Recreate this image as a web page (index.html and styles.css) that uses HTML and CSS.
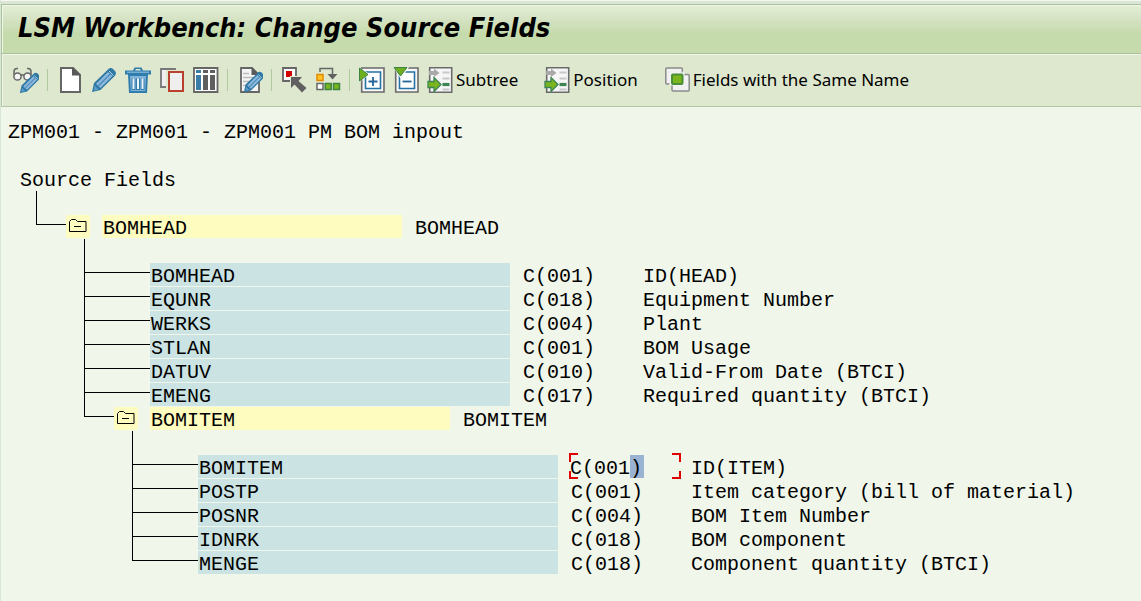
FILE: index.html
```
<!DOCTYPE html>
<html lang="en">

<head>
    <meta charset="UTF-8">
    <title>LSM Workbench: Change Source Fields</title>
    <link rel="stylesheet" href="styles.css">
</head>

<body>
    <!-- shared symbols -->
    <svg class="symbols" width="0" height="0" aria-hidden="true">
        <symbol id="pencil" viewBox="0 0 26 26">
            <path d="M1 25l2-9L17 2.500c1.500-1.800 3.500-2 5-.6l2 2c1.500 1.500 1.200 3.400-.3 5L9.500 23z" fill="#2f78a5" />
            <path d="M5 17L17 5l4.500 4L9.500 21z" fill="#8db9dc" />
            <path d="M7.200 19L19.300 7" stroke="#4b8ab8" stroke-width="1.300" />
            <path d="M18 4l4.500 4.500" stroke="#b7d3e6" stroke-width="1" />
            <path d="M3.500 18.500l4 4-4.500 1.200z" fill="#5b9bc5" />
        </symbol>
        <symbol id="folder" viewBox="0 0 24 23">
            <path d="M3.500 16.500v-10l2-2h4l2 2h8.500v10z" fill="none" stroke="#000" stroke-width="1" />
            <path d="M8 11.500h7" stroke="#000" />
        </symbol>
        <symbol id="goto" viewBox="0 0 26 26">
            <path d="M2.700.8h22v24.400h-22z" fill="#f6f6f6" stroke="#6a6a6a" stroke-width="1.600" />
            <path d="M2 4h5V1.500L12.500 6 7 10V8H2z" fill="#a9a9a9" />
            <path d="M15.500 5.500h7M15.500 11.500h7M15.500 22.500h7" stroke="#c8c8c8" stroke-width="2" />
            <path d="M15.500 17.500h7" stroke="#3c8455" stroke-width="3.200" />
            <path d="M1 14.500h6v-4l7 7-7 7v-4H1z" fill="#7ab51d" stroke="#3c8455" stroke-width="1.300" />
        </symbol>
    </svg>

    <header class="title-bar">
        <h1>LSM Workbench: Change Source Fields</h1>
    </header>

    <div class="toolbar" role="toolbar">
        <button type="button" aria-label="Display/Change">
            <svg class="icon" viewBox="0 0 26 26">
                <g fill="none" stroke="#666" stroke-width="1.500">
                    <circle cx="4.500" cy="9.500" r="3.600" fill="#f5f5f5" />
                    <circle cx="14.500" cy="9.500" r="3.600" fill="#f5f5f5" />
                    <path d="M8 8.500q1.500-1.500 3 0M1 8V4q.5-3 4-2.500M18 8V4q-.5-3-4-2.500" />
                </g>
                <svg x="6" y="5" width="22" height="22"><use href="#pencil" /></svg>
            </svg>
        </button>
        <span class="separator"></span>
        <button type="button" aria-label="Create">
            <svg class="icon" viewBox="0 0 26 26">
                <path d="M4 1h12l7 7v17H4z" fill="#fff" stroke="#666" stroke-width="2" />
                <path d="M15 0l9 8.500h-9z" fill="#5a5a5a" />
            </svg>
        </button>
        <button type="button" aria-label="Change">
            <svg class="icon"><use href="#pencil" /></svg>
        </button>
        <button type="button" aria-label="Delete">
            <svg class="icon" viewBox="0 0 26 26">
                <path d="M0 3.500h8L9.500.5h7L18 3.500h8v4h-3L22 26H4L3 7.500H0z" fill="#2f7dad" />
                <path d="M2 4.500h22v1.500H2z" fill="#79aed2" />
                <path d="M10 3.500l1-1.500h4l1 1.500z" fill="#dde8cd" />
                <path d="M5 9h16l-.8 15H5.800z" fill="#83b4da" />
                <path d="M8.500 11.500V23M13 11.500V23M17.500 11.500V23" stroke="#2f7dad" stroke-width="4" />
                <path d="M8.500 11.500V22M13 11.500V22M17.500 11.500V22" stroke="#eef4f8" stroke-width="2" />
            </svg>
        </button>
        <button type="button" aria-label="Copy">
            <svg class="icon" viewBox="0 0 26 26">
                <path d="M2 2h14v18H2z" fill="#eee" stroke="#777" stroke-width="1.800" />
                <path d="M7 3h19v23H7z" fill="#dde8cd" />
                <path d="M10 5h14v19H10z" fill="#eee" stroke="#b8402c" stroke-width="2" />
            </svg>
        </button>
        <button type="button" aria-label="Fields">
            <svg class="icon" viewBox="0 0 26 26">
                <path d="M1 1h23.500v24H1z" fill="#fff" stroke="#666" stroke-width="1.800" />
                <path d="M3 3h5v3H3zM3 8h5v15H3z" fill="#3a7ea8" />
                <path d="M10 3h5v3h-5zM10 8h5v15h-5zM17 3h5v3h-5zM17 8h5v15h-5z" fill="#5f5f5f" />
            </svg>
        </button>
        <span class="separator"></span>
        <button type="button" aria-label="Edit Long Text">
            <svg class="icon" viewBox="0 0 26 26">
                <path d="M4 1h11l7 7v17H4z" fill="#f5f5f5" stroke="#666" stroke-width="1.800" />
                <path d="M14.500 0l8.500 8h-8.500z" fill="#5a5a5a" />
                <path d="M6 6.500h6M6 10.500h10M6 14.500h9M6 18.500h7" stroke="#bbb" stroke-width="1.500" />
                <svg x="6" y="4" width="22" height="22"><use href="#pencil" /></svg>
            </svg>
        </button>
        <span class="separator"></span>
        <button type="button" aria-label="Select">
            <svg class="icon" viewBox="0 0 26 26">
                <path d="M2 1h13v13H2z" fill="#fff" stroke="#666" stroke-width="1.800" />
                <path d="M5 4h6v6H5z" fill="#d40000" />
                <path d="M9 9h14l-3.500 4.500L26 20.500 20.500 26l-7-6.500L9 23z" fill="#dde8cd" />
                <path d="M10 10h11l-3.500 4 8 7-4.500 4.500-7.500-8L10 21z" fill="#606060" />
            </svg>
        </button>
        <button type="button" aria-label="Reassign">
            <svg class="icon" viewBox="0 0 26 26">
                <path d="M5 5V1.500h12.500V8" fill="none" stroke="#666" stroke-width="1.500" />
                <path d="M12.500 7h10l-5 5.500z" fill="#606060" />
                <path d="M2 7.500h6v6H2z" fill="#ffc425" stroke="#e58a00" stroke-width="1.500" />
                <path d="M2 16.500h6v6H2z" fill="#fff" stroke="#666" stroke-width="1.500" />
                <path d="M10.200 16.500h6v6h-6zM18.500 16.500h6v6h-6z" fill="#7ab51d" stroke="#3c8440" stroke-width="1.500" />
            </svg>
        </button>
        <span class="separator"></span>
        <button type="button" aria-label="Expand">
            <svg class="icon" viewBox="0 0 26 26">
                <path d="M2.700 1h22.300v24H2.700z" fill="#f7f7f7" stroke="#6a6a6a" stroke-width="1.600" />
                <path d="M6.500 5h15v16.500h-15z" fill="#fff" stroke="#2772a5" stroke-width="1.600" />
                <path d="M9.500 14.500h9M14 10v9" stroke="#24659c" stroke-width="1.800" />
                <path d="M0 0l11 7.500L0 15z" fill="#f7f7f7" />
                <path d="M.5 1l8.500 6.500-8.500 6.500z" fill="#6fae20" stroke="#3c8440" />
            </svg>
        </button>
        <button type="button" aria-label="Collapse">
            <svg class="icon" viewBox="0 0 26 26">
                <path d="M2.700 1h22.300v24H2.700z" fill="#f7f7f7" stroke="#6a6a6a" stroke-width="1.600" />
                <path d="M6.500 5h15v16.500h-15z" fill="#fff" stroke="#2772a5" stroke-width="1.600" />
                <path d="M9.500 14.500h9" stroke="#24659c" stroke-width="1.800" />
                <path d="M0 0h16L8 12z" fill="#f7f7f7" />
                <path d="M1 .5h13L7.500 9z" fill="#6fae20" stroke="#3c8440" />
            </svg>
        </button>
        <button type="button" class="with-text">
            <svg class="icon"><use href="#goto" /></svg>
            Subtree
        </button>
        <button type="button" class="with-text">
            <svg class="icon"><use href="#goto" /></svg>
            Position
        </button>
        <button type="button" class="with-text">
            <svg class="icon" viewBox="0 0 26 26">
                <rect x="1.800" y="1" width="16.500" height="16" rx="1" fill="#f1f1f1" stroke="#8a8a8a" stroke-width="1.500" />
                <path d="M5.500 18.500h3M20 4.500v3" stroke="#dde8cf" stroke-width="3" />
                <rect x="8" y="7.500" width="17.200" height="16.500" rx="1" fill="#f1f1f1" stroke="#8a8a8a" stroke-width="1.500" />
                <path d="M5.500 5.500h15V18.500h-15z" fill="#f1f1f1" />
                <rect x="8" y="7.500" width="10.500" height="9.500" rx="1" fill="#7ab51d" stroke="#4a8f35" stroke-width="2" />
            </svg>
            Fields with the Same Name
        </button>
    </div>

    <main class="content">
        <p class="project">ZPM001 - ZPM001 - ZPM001 PM BOM inpout</p>

        <h2>Source Fields</h2>
        <ul class="tree root">
            <li class="trunk"></li>
            <li>
                <div class="row">
                    <span class="branch last"></span>
                    <button type="button" class="folder" aria-label="Collapse BOMHEAD"><svg><use href="#folder" /></svg></button>
                    <span class="structure">BOMHEAD</span>
                    <span>BOMHEAD</span>
                </div>
                <ul class="tree">
                    <li class="trunk"></li>
                    <li class="row"><span class="branch"></span><span class="field">BOMHEAD</span><span class="type">C(001)</span><span>ID(HEAD)</span></li>
                    <li class="row"><span class="branch"></span><span class="field">EQUNR</span><span class="type">C(018)</span><span>Equipment Number</span></li>
                    <li class="row"><span class="branch"></span><span class="field">WERKS</span><span class="type">C(004)</span><span>Plant</span></li>
                    <li class="row"><span class="branch"></span><span class="field">STLAN</span><span class="type">C(001)</span><span>BOM Usage</span></li>
                    <li class="row"><span class="branch"></span><span class="field">DATUV</span><span class="type">C(010)</span><span>Valid-From Date (BTCI)</span></li>
                    <li class="row"><span class="branch"></span><span class="field">EMENG</span><span class="type">C(017)</span><span>Required quantity (BTCI)</span></li>
                    <li>
                        <div class="row">
                            <span class="branch last"></span>
                            <button type="button" class="folder" aria-label="Collapse BOMITEM"><svg><use href="#folder" /></svg></button>
                            <span class="structure">BOMITEM</span>
                            <span>BOMITEM</span>
                        </div>
                        <ul class="tree">
                            <li class="trunk"></li>
                            <li class="row">
                                <span class="branch"></span><span class="field">BOMITEM</span>
                                <span class="type focused">C(001<mark>)</mark>
                                    <svg class="focus-frame" viewBox="0 0 112 26">
                                        <path d="M9 1H1v8M1 18v7h8M103 1h8v8M111 18v7h-8" fill="none" stroke="#e00000" stroke-width="2" />
                                    </svg>
                                </span>
                                <span>ID(ITEM)</span>
                            </li>
                            <li class="row"><span class="branch"></span><span class="field">POSTP</span><span class="type">C(001)</span><span>Item category (bill of material)</span></li>
                            <li class="row"><span class="branch"></span><span class="field">POSNR</span><span class="type">C(004)</span><span>BOM Item Number</span></li>
                            <li class="row"><span class="branch"></span><span class="field">IDNRK</span><span class="type">C(018)</span><span>BOM component</span></li>
                            <li class="row"><span class="branch last"></span><span class="field">MENGE</span><span class="type">C(018)</span><span>Component quantity (BTCI)</span></li>
                        </ul>
                    </li>
                </ul>
            </li>
        </ul>
    </main>
</body>

</html>
```

FILE: styles.css
```
* {
    box-sizing: border-box;
}

body {
    margin: 0;
    padding-top: 4px;
    min-height: 100vh;
    background: linear-gradient(#f4f8f0 1px, #dbe5d5 1px, #dbe5d5 4px, #f0f6ea 4px);
    border-left: 1px solid #d8e6d4;
    color: #000;
}

button {
    padding: 0;
    border: none;
    background: none;
    font: inherit;
    color: inherit;
    cursor: pointer;
}

.symbols {
    position: absolute;
}

/* Title */
.title-bar {
    height: 50px;
    padding-left: 16px;
    border: solid #abc09c;
    border-width: 1px 0 1px 1px;
    background: linear-gradient(#e3efd5, #d5e2c3 30%, #c5dbab 60%, #c5dbab);
    box-shadow: inset 1px 1px #f0f7e8;
}

h1 {
    margin: 0;
    font: italic bold 27px/46px "DejaVu Sans Condensed", "DejaVu Sans", sans-serif;
}

/* Toolbar */
.toolbar {
    display: flex;
    align-items: center;
    gap: 8px;
    height: 53px;
    padding-left: 11px;
    border: solid #b3c7a6;
    border-width: 0 0 1px 1px;
    background: #dde8cf;
    box-shadow: inset 1px 1px #f0f7e8;
    font: 17px/26px "Noto Sans", sans-serif;
}

.toolbar button {
    display: flex;
    align-items: center;
    gap: 3px;
    white-space: nowrap;
}

.toolbar .with-text {
    padding-right: 18px;
}

.icon {
    width: 26px;
    height: 26px;
    flex: none;
}

.separator {
    width: 1px;
    height: 22px;
    margin-right: 1px;
    background: #aecb9b;
}

/* Tree */
.content {
    padding: 12px 6px;
    font: 20px/28px "Liberation Mono", monospace;
    text-indent: 1px;
    white-space: nowrap;
}

.project {
    height: 24px;
    margin: 0 0 24px;
}

h2 {
    height: 24px;
    margin: 0;
    padding-left: 12px;
    font: inherit;
}

.tree {
    margin: 0 0 0 48px;
    padding: 0;
    list-style: none;
}

.tree.root {
    margin-left: 29px;
}

.row {
    display: flex;
    height: 24px;
}

.trunk {
    height: 24px;
    border-left: 1px solid #000;
}

.branch {
    width: 66px;
    background:
        linear-gradient(#000, #000) 0 0 / 1px 100% no-repeat,
        linear-gradient(#000, #000) 0 9px / 100% 1px no-repeat;
}

.branch.last {
    background-size: 1px 9px, 100% 1px;
}

.branch:has(+ .folder) {
    width: 30px;
}

.folder {
    width: 24px;
    height: 23px;
    margin-right: 12px;
    border-radius: 2px;
    background: #fffcbf;
}

.folder svg {
    display: block;
    width: 24px;
    height: 23px;
}

.structure,
.field {
    height: 23px;
    margin-right: 12px;
}

.structure {
    width: 300px;
    background: #fffcbf;
}

.field {
    width: 360px;
    background: #cbe3e3;
}

.type {
    width: 120px;
}

.focused {
    position: relative;
    text-indent: 0;
}

.focused mark {
    display: inline-block;
    width: 14px;
    height: 23px;
    background: #9ab3d3;
    color: inherit;
    vertical-align: top;
}

.focus-frame {
    position: absolute;
    top: -2px;
    left: -1px;
    width: 112px;
    height: 26px;
}
```
